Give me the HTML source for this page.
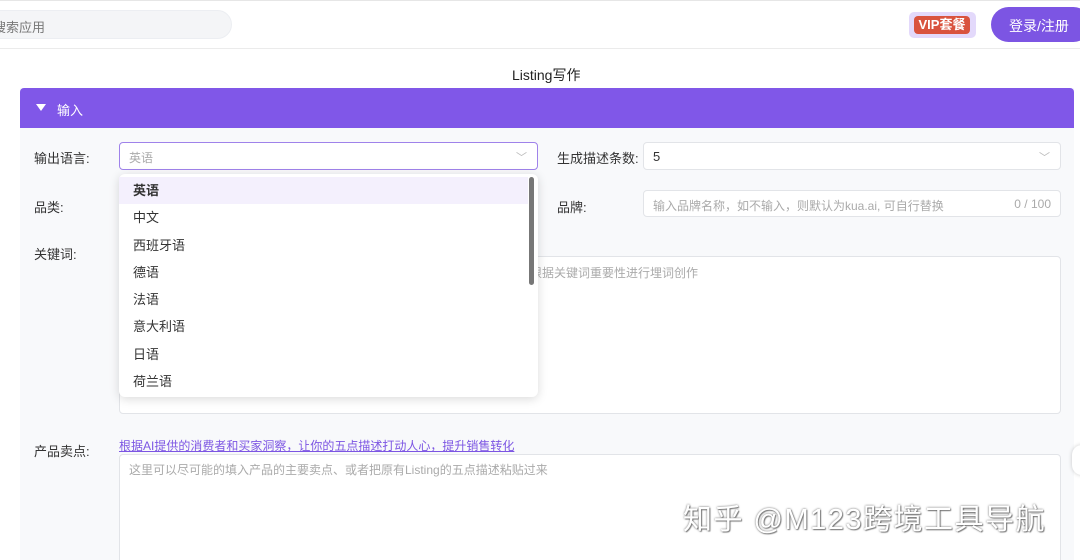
<!DOCTYPE html>
<html><head><meta charset="utf-8"><style>
*{box-sizing:border-box;margin:0;padding:0}
html,body{width:1080px;height:560px;overflow:hidden}
body{background:#fff;font-family:"Liberation Sans","Noto Sans CJK SC",sans-serif;font-size:13px;color:#333;position:relative}
.abs{position:absolute}
.top{left:0;top:0;width:1080px;height:49px;border-bottom:1px solid #ebebeb;border-top:1px solid #e6e6e6}
.search{left:-20px;top:10px;width:252px;height:29px;border-radius:15px;background:#f4f5f7;border:1px solid #eceef2;color:#777;padding:6px 0 0 12px;font-size:13px}
.vip{left:909px;top:12px;width:67px;height:26px;border-radius:5px;background:#e3d9fb}
.vip span{position:absolute;left:5px;top:4px;width:56px;height:18px;border-radius:4px;background:#d9533e;color:#fff;font-weight:bold;font-size:13px;text-align:center;line-height:18px}
.login{left:991px;top:7px;width:100px;height:35px;border-radius:18px;background:#7c55e3;color:#fff;font-size:14px;padding:9px 0 0 18px}
.panel{left:20px;top:88px;width:1054px;height:472px;background:#f8f9fb}
.bar{left:20px;top:88px;width:1054px;height:40px;background:#8057e8;border-radius:4px 4px 0 0;color:#fff;font-size:13px}
.lbl{color:#333;font-size:13px}
.inp{background:#fff;border:1px solid #e2e4e8;border-radius:4px}
.ph{color:#aaa;font-size:12px}
.dd{left:119px;top:174px;width:419px;height:223px;background:#fff;border-radius:6px;box-shadow:0 2px 10px rgba(0,0,0,.15)}
.dd div{height:27.3px;line-height:27px;padding-left:14px;font-size:13px;color:#333}
</style></head><body>
<div class="abs top"></div>
<div class="abs search">搜索应用</div>
<div class="abs vip"><span>VIP套餐</span></div>
<div class="abs login">登录/注册</div>
<div class="abs" style="left:512px;top:65px;font-size:14px;color:#222">Listing写作</div>
<div class="abs panel"></div>
<div class="abs bar"><span style="position:absolute;left:16px;top:16px;width:0;height:0;border-left:5px solid transparent;border-right:5px solid transparent;border-top:7px solid #fff"></span><span style="position:absolute;left:37px;top:12px">输入</span></div>

<div class="abs lbl" style="left:34px;top:148px">输出语言:</div>
<div class="abs inp" style="left:119px;top:142px;width:419px;height:28px;border-color:#9f82ea"><span class="ph" style="position:absolute;left:9px;top:6px">英语</span><span style="position:absolute;right:10px;top:6px;color:#bbb;font-size:11px">﹀</span></div>
<div class="abs lbl" style="left:557px;top:148px">生成描述条数:</div>
<div class="abs inp" style="left:643px;top:142px;width:418px;height:28px"><span style="position:absolute;left:9px;top:6px;font-size:13px">5</span><span style="position:absolute;right:10px;top:6px;color:#bbb;font-size:11px">﹀</span></div>

<div class="abs lbl" style="left:34px;top:197px">品类:</div>
<div class="abs lbl" style="left:557px;top:197px">品牌:</div>
<div class="abs inp" style="left:643px;top:190px;width:418px;height:27px"><span class="ph" style="position:absolute;left:9px;top:6px">输入品牌名称，如不输入，则默认为kua.ai, 可自行替换</span><span class="ph" style="position:absolute;right:9px;top:6px">0 / 100</span></div>

<div class="abs lbl" style="left:34px;top:244px">关键词:</div>
<div class="abs inp" style="left:119px;top:256px;width:942px;height:158px"><span class="ph" style="position:absolute;left:410px;top:7px">根据关键词重要性进行埋词创作</span></div>

<div class="abs lbl" style="left:34px;top:441px">产品卖点:</div>
<div class="abs" style="left:119px;top:437px;font-size:12px;color:#7c55e3;text-decoration:underline">根据AI提供的消费者和买家洞察，让你的五点描述打动人心，提升销售转化</div>
<div class="abs inp" style="left:119px;top:454px;width:942px;height:120px"><span class="ph" style="position:absolute;left:9px;top:6px">这里可以尽可能的填入产品的主要卖点、或者把原有Listing的五点描述粘贴过来</span></div>
<div class="abs" style="left:683px;top:496px;font-size:29px;letter-spacing:1.5px;color:#fff;text-shadow:0 0 2px #666,1px 1px 1px #888">知乎 @M123跨境工具导航</div>
<div class="abs" style="left:1072px;top:445px;width:20px;height:30px;border-radius:10px;background:#fff;box-shadow:0 0 4px rgba(0,0,0,.2)"></div>

<div class="abs dd">
<div style="margin-top:3px;background:#f4f0fd;font-weight:bold;margin-right:10px">英语</div>
<div>中文</div><div>西班牙语</div><div>德语</div><div>法语</div><div>意大利语</div><div>日语</div><div>荷兰语</div>
<span style="position:absolute;right:4px;top:3px;width:5px;height:108px;border-radius:3px;background:#777"></span>
</div>
</body></html>
